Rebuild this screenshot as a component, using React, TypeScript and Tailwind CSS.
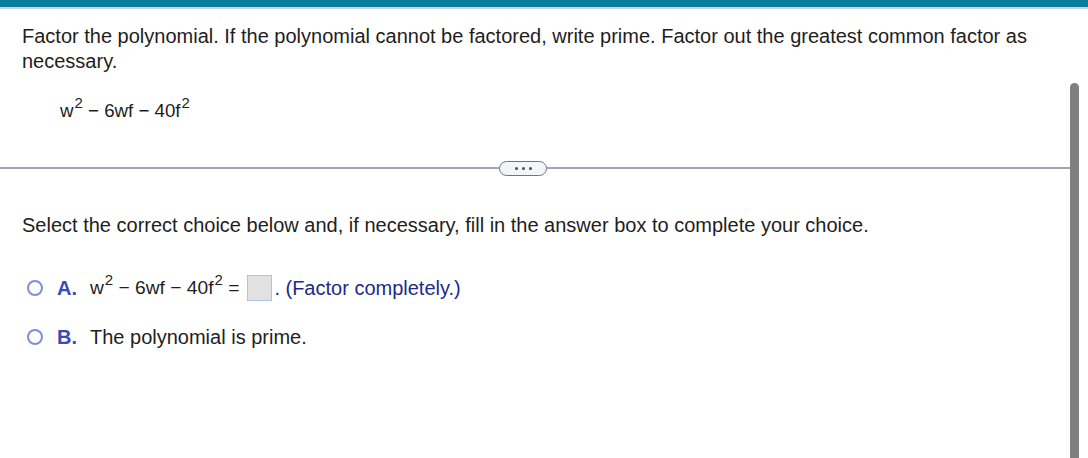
import React from "react";

function Sup({ children }: { children: React.ReactNode }) {
  return <span className="inline-block text-[15px] leading-none relative -top-[9px] ml-[1px]">{children}</span>;
}

export default function App() {
  return (
    <div className="w-[1088px] h-[458px] bg-white overflow-hidden text-[#1e1e1e]" style={{ fontFamily: '"Liberation Sans", Arial, sans-serif' }}>
      <div className="h-[7px] bg-[#0b7b9b]" />
      <div className="h-[2px] bg-[#c9d5e1]" />
      <div className="flex">
        <div className="w-[1070px] flex flex-col">
          <div className="pl-[22px] pt-[15px] pr-[30px] text-[20px] leading-[25px]">
            Factor the polynomial. If the polynomial cannot be factored, write prime. Factor out the greatest common factor as necessary.
          </div>
          <div className="pl-[60px] mt-[24px] text-[18.7px] leading-[26px] whitespace-nowrap">
            w<Sup>2</Sup> − 6wf − 40f<Sup>2</Sup>
          </div>
          <div className="mt-[36px] flex items-center h-[16px]">
            <div className="h-[2px] bg-[#a0a6b4] w-[499px]" />
            <div className="w-[48px] h-[15px] rounded-full border-[1.5px] border-[#6e7585] bg-[#f4f5f8] flex items-center justify-center gap-[4px]">
              <span className="w-[3px] h-[3px] rounded-full bg-[#4a4f5c]" />
              <span className="w-[3px] h-[3px] rounded-full bg-[#4a4f5c]" />
              <span className="w-[3px] h-[3px] rounded-full bg-[#4a4f5c]" />
            </div>
            <div className="h-[2px] bg-[#a0a6b4] flex-1" />
          </div>
          <div className="pl-[22px] mt-[36px] text-[20px] leading-[26px]">
            Select the correct choice below and, if necessary, fill in the answer box to complete your choice.
          </div>
          <div className="pl-[27px] mt-[36px] flex items-center h-[28px] text-[20px] whitespace-nowrap">
            <span className="w-[16px] h-[16px] rounded-full border-[2px] border-[#7d8fd9] bg-white" />
            <span className="ml-[14px] font-bold text-[#3a4ab8]">A.</span>
            <span className="ml-[13px] text-[19.2px]">
              w<Sup>2</Sup> − 6wf − 40f<Sup>2</Sup> =
            </span>
            <span className="ml-[8px] w-[25px] h-[26px] border border-[#a9c5ea] bg-[#e2e2e2]" />
            <span className="ml-[2px] text-[#1d2a8a]">. (Factor completely.)</span>
          </div>
          <div className="pl-[27px] mt-[21px] flex items-center h-[28px] text-[20px]">
            <span className="w-[16px] h-[16px] rounded-full border-[2px] border-[#7d8fd9] bg-white" />
            <span className="ml-[14px] font-bold text-[#3a4ab8]">B.</span>
            <span className="ml-[13px]">The polynomial is prime.</span>
          </div>
        </div>
        <div className="w-[9px] mt-[74px] h-[400px] rounded-t-full bg-[#808080]" />
      </div>
    </div>
  );
}
